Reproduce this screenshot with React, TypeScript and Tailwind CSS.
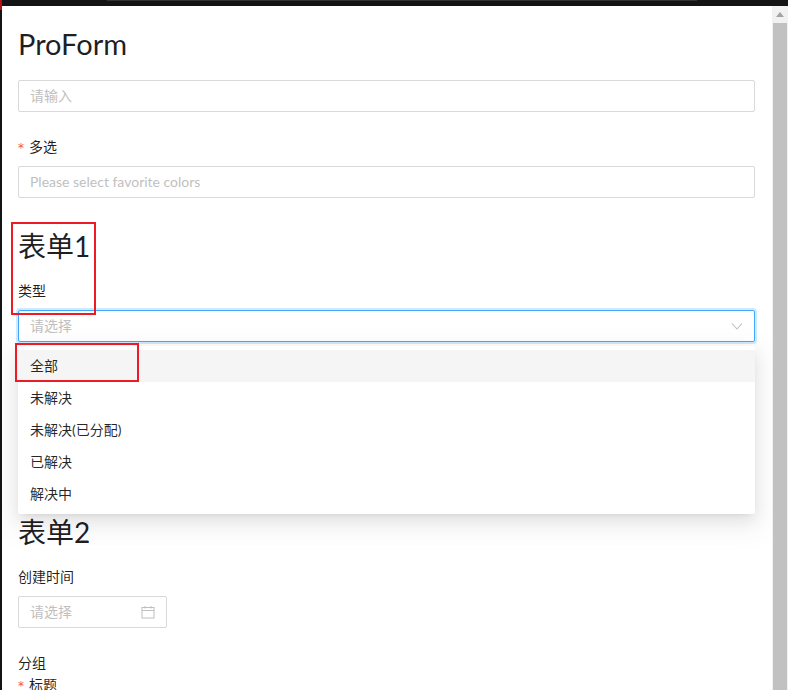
import React from "react";

const FONT = "font-['Lato','Noto_Sans_CJK_SC',sans-serif]";

function Label({ children, required }: { children: React.ReactNode; required?: boolean }) {
  return (
    <div className="flex h-[22px] items-center text-[14px] leading-[22px] text-[#000000e0]">
      {required && <span className="mr-[4px] mt-[2px] w-[7px] font-['DejaVu_Sans',sans-serif] text-[12px] leading-[22px] text-[#ff4d4f]">*</span>}
      {children}
    </div>
  );
}

function Box({ children, className = "" }: { children: React.ReactNode; className?: string }) {
  return (
    <div className={`flex h-[32px] items-center rounded-[2px] border bg-white px-[11px] pb-[2px] text-[14px] text-[#bfbfbf] ${className}`}>
      {children}
    </div>
  );
}

const OPTIONS = ["全部", "未解决", "未解决(已分配)", "已解决", "解决中"];

export default function App() {
  return (
    <div className={`relative flex h-[690px] w-[788px] flex-col overflow-hidden bg-[#141414] ${FONT}`}>
      <div className="absolute left-[107px] top-0 h-[1px] w-[590px] bg-[#333333]" />
      <div className="absolute left-0 top-0 h-[10px] w-[2px] bg-[#b01010]" />
      <div className="mt-[6px] flex min-h-0 flex-1 pl-[2px]">
        <div className="relative min-h-0 flex-1 overflow-hidden bg-white">
          <div className="flex flex-col px-[16px] pr-[17px]">
            <h1 className="mt-[20px] h-[38px] text-[29px] leading-[36px] text-[#000000e0]">ProForm</h1>
            <Box className="mt-[16px] border-[#d9d9d9]">请输入</Box>
            <div className="mt-[24px]">
              <Label required>多选</Label>
            </div>
            <Box className="mt-[8px] border-[#d9d9d9]">Please select favorite colors</Box>
            <h2 className="mt-[24px] h-[48px] text-[28px] leading-[48px] text-[#000000e0]">表单1</h2>
            <div className="mt-[10px]">
              <Label>类型</Label>
            </div>
            <div className="relative mt-[8px]">
              <Box className="justify-between border-[#40a9ff] shadow-[0_0_0_2px_rgba(24,144,255,0.2)]">
                <span>请选择</span>
                <svg className="mt-[2px]" width="12" height="12" viewBox="0 0 12 12" fill="none" stroke="#bfbfbf" strokeWidth="1.1">
                  <path d="M1 3.5 L6 9 L11 3.5" />
                </svg>
              </Box>
              <div className="absolute left-0 right-0 top-[36px] z-10 rounded-[2px] bg-white py-[4px] text-[14px] text-[#000000d9] shadow-[0_3px_6px_-4px_rgba(0,0,0,0.12),0_6px_16px_0_rgba(0,0,0,0.08),0_9px_28px_8px_rgba(0,0,0,0.05)]">
                {OPTIONS.map((o, i) => (
                  <div key={o} className={`flex h-[32px] items-center px-[12px] pb-[2px] ${i === 0 ? "bg-[#f5f5f5]" : ""}`}>
                    {o}
                  </div>
                ))}
              </div>
            </div>
            <h2 className="mt-[166px] h-[48px] text-[28px] leading-[48px] text-[#000000e0]">表单2</h2>
            <div className="mt-[10px]">
              <Label>创建时间</Label>
            </div>
            <Box className="mt-[8px] w-[149px] justify-between border-[#d9d9d9]">
              <span>请选择</span>
              <svg className="mt-[2px]" width="14" height="14" viewBox="0 0 14 14" fill="none" stroke="#bfbfbf" strokeWidth="1">
                <rect x="1" y="2.5" width="12" height="10.5" />
                <path d="M1 5.5 H13 M4 1 V3.5 M10 1 V3.5" />
              </svg>
            </Box>
            <div className="mt-[24px]">
              <Label>分组</Label>
            </div>
            <div className="mt-[0px]">
              <Label required>标题</Label>
            </div>
          </div>
          <div className="pointer-events-none absolute left-[9px] top-[216px] z-20 h-[93px] w-[85px] border-2 border-[#ed1c24]" />
          <div className="pointer-events-none absolute left-[13px] top-[337px] z-20 h-[39px] w-[124px] border-2 border-[#ed1c24]" />
        </div>
        <div className="flex w-[16px] flex-col bg-[#f1f1f1] pl-[1px] pr-[1px]">
          <div className="flex h-[17px] items-center justify-center">
            <svg width="8" height="5" viewBox="0 0 8 5"><path d="M4 0 L8 5 H0 Z" fill="#a3a3a3" /></svg>
          </div>
          <div className="flex-1 bg-[#c1c1c1]" />
        </div>
      </div>
    </div>
  );
}
